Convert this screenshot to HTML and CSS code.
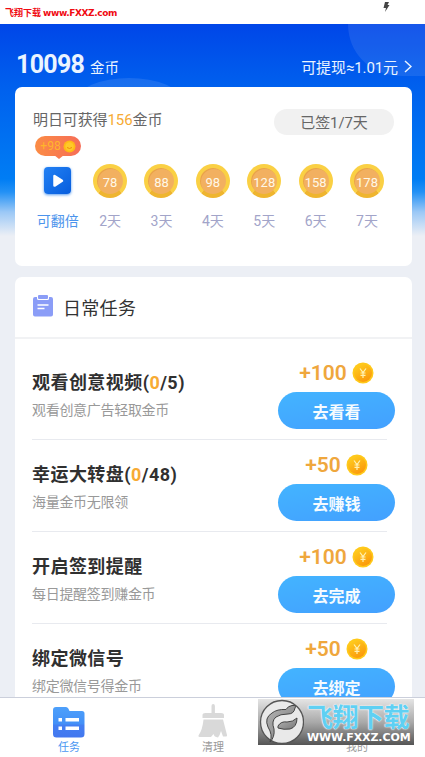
FILE: index.html
```html
<!DOCTYPE html>
<html lang="zh-CN">
<head>
<meta charset="utf-8">
<title>任务</title>
<link rel="stylesheet" href="styles.css">
</head>
<body>
<svg width="0" height="0" class="defs">
  <defs>
    <linearGradient id="coinFill" x1="0" y1="0" x2="0.6" y2="1"><stop offset="0" stop-color="#ffd321"/><stop offset="1" stop-color="#fb9a0c"/></linearGradient>
    <linearGradient id="folderFill" x1="0" y1="0" x2="0" y2="1"><stop offset="0" stop-color="#4da0fb"/><stop offset="0.55" stop-color="#4490f7"/><stop offset="0.6" stop-color="#447ff2"/><stop offset="1" stop-color="#4377ef"/></linearGradient>
    <linearGradient id="logoFill" x1="0" y1="0" x2="1" y2="1"><stop offset="0" stop-color="#b5b5b5"/><stop offset="1" stop-color="#777"/></linearGradient>
    <symbol id="coin" viewBox="0 0 22 22">
      <circle cx="11" cy="11" r="10.5" fill="#ffc91a"/>
      <circle cx="11" cy="11" r="9" fill="url(#coinFill)"/>
      <path d="M8 6.500 11 10.700l3-4.200M11 10.700V16M8.500 11h5M8.500 13.300h5" fill="none" stroke="#fff0b0" stroke-width="1.200"/>
    </symbol>
  </defs>
</svg>
<header class="status">
  <span class="site">飞翔下载 <b>www.FXXZ.com</b></span>
  <svg class="bolt" width="7" height="10" viewBox="0 0 7 10"><path d="M2 0h4L4.500 3h2L2 10l1-4H.5z" fill="#444"/></svg>
</header>
<main class="page">
  <svg class="circles" width="425" height="64" viewBox="0 0 425 64"><path d="M348 0c0 28 21 52 55 52h22V0z" fill="#fff" fill-opacity=".09"/><ellipse cx="129" cy="76" rx="52" ry="22" fill="#fff" fill-opacity=".1"/></svg>
  <section class="balance">
    <strong>10098</strong><span class="unit">金币</span>
    <span class="cash">可提现≈1.01元</span>
    <svg width="8" height="13" viewBox="0 0 8 13"><path d="m1 1 6 5.500L1 12" fill="none" stroke="#eaf4ff" stroke-width="1.500"/></svg>
  </section>
  <section class="card sign">
    <div class="sign-head"><span>明日可获得<em>156</em>金币</span><span class="pill">已签1/7天</span></div>
    <div class="days">
      <div class="day today">
        <span class="bubble">+98<svg width="13" height="13" viewBox="0 0 13 13"><circle cx="6.500" cy="6.500" r="6" fill="#ffb916"/><circle cx="6.500" cy="6.500" r="4.200" fill="#ffc928"/><path d="M4 7.500q2.500 2 5 0" stroke="#f18a0b" fill="none"/></svg></span>
        <span class="play"><svg width="27" height="27" viewBox="0 0 27 27"><path d="M10.500 9v9.600l7.500-4.800z" fill="#fff" stroke="#fff" stroke-width="2.500" stroke-linejoin="round"/></svg></span>
        <span class="label">可翻倍</span>
      </div>
      <div class="day"><span class="medal">78</span><span class="label">2天</span></div>
      <div class="day"><span class="medal">88</span><span class="label">3天</span></div>
      <div class="day"><span class="medal">98</span><span class="label">4天</span></div>
      <div class="day"><span class="medal">128</span><span class="label">5天</span></div>
      <div class="day"><span class="medal">158</span><span class="label">6天</span></div>
      <div class="day"><span class="medal">178</span><span class="label">7天</span></div>
    </div>
  </section>
  <section class="card tasks">
    <h2><svg width="20" height="22" viewBox="0 0 20 22"><path d="M2 2h2v1.500Q4 5 5.500 5h9Q16 5 16 3.500V2h2q2 0 2 2v15.500q0 2-2 2H2q-2 0-2-2V4q0-2 2-2z" fill="#8b9df7"/><rect x="5" width="10" height="4" rx="1" fill="#8b9df7"/><path d="M4.500 10h11M4.500 13.500h7" stroke="#fff" stroke-width="1.300"/></svg>日常任务</h2>
    <div class="list">
      <article class="task"><div class="info"><h3>观看创意视频(<em>0</em>/5)</h3><p>观看创意广告轻取金币</p></div><div class="action"><span class="reward">+100<svg width="22" height="22"><use href="#coin"/></svg></span><button>去看看</button></div></article>
      <article class="task"><div class="info"><h3>幸运大转盘(<em>0</em>/48)</h3><p>海量金币无限领</p></div><div class="action"><span class="reward">+50<svg width="22" height="22"><use href="#coin"/></svg></span><button>去赚钱</button></div></article>
      <article class="task"><div class="info"><h3>开启签到提醒</h3><p>每日提醒签到赚金币</p></div><div class="action"><span class="reward">+100<svg width="22" height="22"><use href="#coin"/></svg></span><button>去完成</button></div></article>
      <article class="task"><div class="info"><h3>绑定微信号</h3><p>绑定微信号得金币</p></div><div class="action"><span class="reward">+50<svg width="22" height="22"><use href="#coin"/></svg></span><button>去绑定</button></div></article>
    </div>
  </section>
</main>
<nav class="tabs">
  <div class="tab active"><svg width="32" height="31" viewBox="0 0 32 31"><path d="M3 0h10q1.500 0 2.300 1.500L16.500 4H29q2.500 0 2.500 2.500V27q0 3.500-3.500 3.500H3.500Q0 30.500 0 27V3q0-3 3-3z" fill="url(#folderFill)"/><path d="M5.500 11h3.500v3.500H5.500zM12.500 11H26v3.500H12.500zM5.500 19.500h3.500V23H5.500zM12.500 19.500H26V23H12.500z" fill="#fff"/></svg><span>任务</span></div>
  <div class="tab"><svg width="30" height="34" viewBox="0 0 30 34"><path d="M13.500 2q0-2 1.700-2t1.700 2v7H23q3 0 3 2v3H4.500v-3q0-2 3-2h6zM5.500 15.500H25L29 31q.3 1.500-1 1.500h-3L23 27q-1 4-3 6.500-4-.5-4.500-3.500l-2.500 3H2q-2 0-1.500-1.500Q4.500 26 5.500 15.500z" fill="#d9d9d9"/></svg><span>清理</span></div>
  <div class="tab"><span>我的</span></div>
</nav>
<aside class="mark">
  <svg width="46" height="46" viewBox="0 0 46 46"><circle cx="24" cy="23" r="21.500" fill="#e9e9e9" stroke="#555" stroke-width="1.300"/><path d="M12 43Q15 36 10 28 6 19 14 14q5-4 14-3.500 2-3.500 6-4 5-.5 3 2.500-1 6-7 6-8 0-12 3-5 4-2 12 1 8-4 13z" fill="url(#logoFill)" stroke="#444"/><path d="M20 27q3-5 9-4 6 0 10-4 0 9-7 11-6 1-12-1z" fill="url(#logoFill)" stroke="#444"/></svg>
  <div class="mark-text"><b>飞翔下载</b><span>WWW.FXXZ.COM</span></div>
</aside>
</body>
</html>
```
FILE: styles.css
```css
* { box-sizing: border-box; margin: 0; padding: 0; }
body { position: relative; width: 425px; height: 757px; overflow: hidden; display: flex; flex-direction: column; background: #eceff5; font-family: Roboto, "Noto Sans CJK SC", sans-serif; }
em { font-style: normal; color: #f7ab34; }
.defs { position: absolute; }
.status { flex: none; height: 24px; background: #fff; display: flex; justify-content: space-between; padding: 2px 35px 0 5px; }
.site { color: #f00a12; font: 700 9px/21px "Noto Sans CJK SC", sans-serif; white-space: nowrap; }
.site b { font-family: "DejaVu Sans", sans-serif; font-size: 9px; letter-spacing: -.4px; }
.page { position: relative; flex: 1; min-height: 0; overflow: hidden; padding: 0 13px 0 15px; background: linear-gradient(#0046e8 0, #0061ee 65px, #007df4 155px, #2391f5 168px, #9bc8f6 188px, #eceff5 212px); }
.circles { position: absolute; left: 0; top: 0; }
.balance { position: relative; height: 63px; padding: 26px 0 0 1px; display: flex; align-items: baseline; color: #eaf4ff; line-height: 30px; }
.balance strong { font-size: 25px; width: 74px; letter-spacing: -.7px; }
.unit { font-size: 14.500px; }
.cash { margin-left: auto; margin-right: 6px; font-size: 15px; letter-spacing: -.1px; }
.card { position: relative; background: #fff; border-radius: 7px; }
.sign { height: 179px; padding: 22px 18px 0; }
.sign-head { display: flex; justify-content: space-between; font-size: 15px; line-height: 22px; color: #666; letter-spacing: -.1px; }
.pill { width: 120px; height: 26px; line-height: 29px; border-radius: 13px; background: #f1f1f1; text-align: center; letter-spacing: -.1px; }
.days { display: flex; width: 361px; }
.day { position: relative; flex: none; width: 51.400px; display: flex; flex-direction: column; align-items: center; padding-top: 29px; }
.bubble { position: absolute; top: 1px; left: 2px; width: 46px; height: 20px; border-radius: 10px; display: flex; align-items: center; justify-content: center; gap: 2px; background: linear-gradient(90deg, #fb8c45, #f66d57); color: #ffb52b; font-size: 12px; }
.bubble::after { content: ""; position: absolute; top: 19px; left: 19px; border: 5px solid transparent; border-top: 4px solid #f97a50; border-bottom: 0; }
.medal { width: 34px; height: 34px; border-radius: 50%; background: #f2b060; border: 4px solid #fad044; box-shadow: inset 1px 1px 0 #eaa348; border-bottom-color: #efb52f; color: #fff8e8; font-size: 13px; line-height: 29px; text-align: center; }
.play { width: 27px; height: 27px; margin: 3px 0 4px; border-radius: 4px; background: linear-gradient(135deg, #2381f4, #075ddd); box-shadow: 0 1px 3px #5a9df0; }
.label { margin-top: 12px; font-size: 14px; line-height: 23px; color: #a2a4c9; white-space: nowrap; }
.today .label, .play { position: relative; right: 1px; }
.today .label { color: #4c94ec; }
.tasks { margin-top: 11px; height: 500px; }
h2 { height: 62px; border-bottom: 2px solid #f1f2f4; display: flex; align-items: center; gap: 10px; padding-left: 18px; font-size: 18px; font-weight: 400; color: #333; letter-spacing: .3px; }
h2 svg { margin-bottom: 3px; }
.list { padding: 8px 17px 0; }
.task { position: relative; height: 92px; display: flex; justify-content: space-between; }
.task::after { content: ""; position: absolute; left: 0; bottom: -1px; width: 355px; height: 1px; background: #e8eaef; }
.info { padding-top: 22px; }
h3 { font-size: 18px; line-height: 27px; color: #303030; letter-spacing: .45px; white-space: nowrap; }
.info p { margin-top: 2px; font-size: 14px; line-height: 24px; color: #999; letter-spacing: -.3px; }
.action { width: 117px; padding-top: 14px; }
.reward { height: 24px; display: flex; align-items: center; justify-content: center; gap: 5px; color: #efa73d; font-size: 21px; line-height: 26px; font-weight: 600; }
button { display: block; width: 117px; height: 37px; margin-top: 7px; border: 0; border-radius: 19px; background: linear-gradient(170deg, #43b4ff, #43a0ff); color: #f5fbff; font: 700 16px/36px "Noto Sans CJK SC", sans-serif; }
.tabs { flex: none; height: 60px; border-top: 1px solid #cbcfdb; background: #fff; display: flex; }
.tab { width: 144px; flex: none; padding: 0 6px 0 0; display: flex; flex-direction: column; align-items: center; justify-content: flex-end; color: #999; font-size: 11px; line-height: 19px; }
.active { color: #4b97f2; }
.mark { position: absolute; left: 258px; top: 699px; width: 156px; height: 46px; display: flex; background: linear-gradient(#e4e4e4, #aaa 50%, #555); }
.mark-text { margin-left: 3px; width: 106px; }
.mark-text b { display: block; color: #5fd0f3; font: 700 26px/34px "Noto Sans CJK SC", sans-serif; letter-spacing: -.5px; text-shadow: 0 0 2px #fff, 0 0 1px #fff; white-space: nowrap; }
.mark-text span { display: block; color: #fff; font: 700 11px/10px "DejaVu Sans", sans-serif; letter-spacing: -.1px; white-space: nowrap; }
```
